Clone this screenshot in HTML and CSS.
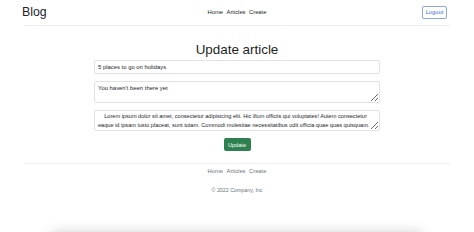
FILE: index.html
```html
<!DOCTYPE html>
<html lang="en">
<head>
    <meta charset="UTF-8">
    <meta name="viewport" content="width=device-width, initial-scale=1.0">
    <title>Blog - Update article</title>
    <link rel="stylesheet" href="styles.css">
</head>
<body>
    <div class="container">
        <!-- Header -->
        <header class="site-header">
            <a class="brand" href="#">Blog</a>
            <nav class="nav">
                <a href="#">Home</a>
                <a href="#">Articles</a>
                <a href="#">Create</a>
            </nav>
            <div class="header-actions">
                <button class="logout-btn">Logout</button>
            </div>
        </header>

        <!-- Update form -->
        <main class="content">
            <h1>Update article</h1>
            <form class="article-form">
                <input type="text" class="field" value="5 places to go on holidays">
                <textarea class="field field-short">You haven't been there yet</textarea>
                <textarea class="field field-body">    Lorem ipsum dolor sit amet, consectetur adipisicing elit. Hic illum officiis qui voluptates! Autem consectetur
eaque id ipsam iusto placeat, sunt totam. Commodi molestiae necessitatibus odit officia quae quas quisquam.</textarea>
                <button type="submit" class="submit-btn">Update</button>
            </form>
        </main>

        <!-- Footer -->
        <footer class="site-footer">
            <nav class="nav">
                <a href="#">Home</a>
                <a href="#">Articles</a>
                <a href="#">Create</a>
            </nav>
            <p class="copyright">&copy; 2022 Company, Inc</p>
        </footer>
    </div>
    <div class="bottom-card"></div>
</body>
</html>
```

FILE: styles.css
```css
* {
    margin: 0;
    padding: 0;
    box-sizing: border-box;
}

body {
    font-family: 'Liberation Sans', Arial, sans-serif;
    color: #212529;
    background: #fff;
    overflow: hidden;
}

a {
    color: inherit;
    text-decoration: none;
}

.container {
    width: 426px;
    margin: 0 auto;
}

.site-header {
    height: 26px;
    display: grid;
    grid-template-columns: 1fr auto 1fr;
    align-items: center;
    border-bottom: 1px solid #eceef0;
}

.brand {
    font-size: 12.3px;
    color: #212529;
    margin-left: -2px;
    margin-top: -1px;
}

.nav {
    display: flex;
    gap: 3.5px;
    font-size: 5.8px;
    color: #212529;
}

.site-header .nav {
    margin-top: -2px;
}

.header-actions {
    display: flex;
    justify-content: flex-end;
}

.logout-btn {
    font-family: inherit;
    font-size: 5.8px;
    color: #3a6ed8;
    background: #fff;
    border: 1px solid #8aa9e6;
    border-radius: 2px;
    height: 13px;
    width: 25px;
    margin-right: 3px;
    margin-top: -1px;
}

.content {
    display: flex;
    flex-direction: column;
    align-items: center;
}

h1 {
    font-weight: 400;
    font-size: 13.4px;
    margin-top: 15px;
    line-height: 18px;
    color: #1d1f22;
}

.article-form {
    width: 286px;
    display: flex;
    flex-direction: column;
    align-items: center;
    margin-top: 1px;
}

.field {
    width: 100%;
    font-family: inherit;
    font-size: 5.9px;
    color: #212529;
    border: 1px solid #dfe2e6;
    border-radius: 2px;
    padding: 2px 3px;
    outline: none;
    resize: vertical;
}

input.field {
    height: 14px;
}

.field-short {
    height: 22px;
    margin-top: 7px;
    line-height: 8px;
}

.field-body {
    height: 21px;
    margin-top: 7px;
    padding: 1px 3px;
    font-size: 5.6px;
    line-height: 9px;
    white-space: pre;
    overflow: hidden;
}

.submit-btn {
    margin-top: 7px;
    font-family: inherit;
    font-size: 5.6px;
    color: #fff;
    background: #2f8050;
    border: none;
    border-radius: 2px;
    height: 13px;
    width: 27px;
}

.site-footer {
    margin-top: 12px;
    border-top: 1px solid #eceef0;
    display: flex;
    flex-direction: column;
    align-items: center;
}

.site-footer .nav {
    margin-top: 4px;
    color: #6c757d;
}

.copyright {
    font-size: 5.3px;
    color: #6c757d;
    margin-top: 13px;
}

.bottom-card {
    width: 372px;
    height: 40px;
    margin: 42px auto 0;
    box-shadow: 0 -2px 14px rgba(0, 0, 0, 0.2);
}
```
